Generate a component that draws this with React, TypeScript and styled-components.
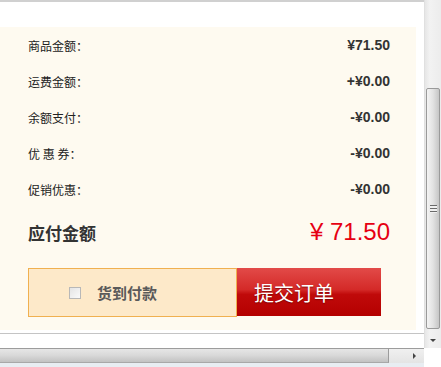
import React from "react";
import styled, { createGlobalStyle } from "styled-components";

const Global = createGlobalStyle`
  html, body { margin: 0; padding: 0; background: #fff; }
  body { width: 441px; height: 367px; overflow: hidden; font-family: "Liberation Sans", "Noto Sans CJK SC", sans-serif; }
`;

const Frame = styled.div`
  width: 441px;
  height: 367px;
  display: grid;
  grid-template-columns: 424px 17px;
  grid-template-rows: 348px 19px;
`;

const Viewport = styled.div`
  border-top: 2px solid #d0d0d0;
  display: flex;
  flex-direction: column;
  background: #fff;
`;

const Panel = styled.div`
  margin: 25px 8px 0 0;
  background: #fefaf0;
  padding: 0 26px 13px 28px;
  display: flex;
  flex-direction: column;
`;

const Row = styled.div`
  height: 36px;
  display: flex;
  align-items: center;
  justify-content: space-between;
`;

const Label = styled.span`
  font-family: "Noto Sans CJK SC", sans-serif;
  font-size: 12px;
  color: #222;
`;

const Value = styled.span`
  font-family: "Liberation Sans", Arial, sans-serif;
  font-weight: bold;
  font-size: 14px;
  color: #333;
`;

const TotalRow = styled.div`
  height: 50px;
  display: flex;
  align-items: center;
  justify-content: space-between;
`;

const TotalLabel = styled.span`
  font-family: "Noto Sans CJK SC", sans-serif;
  font-weight: bold;
  font-size: 17px;
  color: #333;
`;

const TotalValue = styled.span`
  font-family: "Liberation Sans", Arial, sans-serif;
  font-size: 24px;
  color: #e60012;
`;

const Actions = styled.div`
  margin-top: 11px;
  margin-right: 9px;
  display: flex;
  height: 49px;
`;

const CodBox = styled.label`
  width: 209px;
  box-sizing: border-box;
  border: 1px solid #f0b050;
  background: #fde9c9;
  display: flex;
  align-items: center;
  padding-left: 40px;
  gap: 16px;
`;

const Check = styled.span`
  width: 12px;
  height: 12px;
  box-sizing: border-box;
  border: 1px solid #b8b8b8;
  background: linear-gradient(135deg, #e4e4e4, #fafafa);
`;

const CodText = styled.span`
  font-family: "Noto Sans CJK SC", sans-serif;
  font-weight: bold;
  font-size: 15px;
  color: #5a5a5a;
`;

const Submit = styled.button`
  width: 144px;
  height: 48px;
  border: 0;
  padding: 0 0 0 17px;
  text-align: left;
  font-family: "Noto Sans CJK SC", sans-serif;
  font-size: 20px;
  color: #fff;
  text-shadow: 0 1px 1px rgba(90, 0, 0, 0.6);
  background: linear-gradient(#e24a48 0%, #d42a28 45%, #c00a0a 55%, #b40000 100%);
  cursor: pointer;
`;

const Spacer = styled.div`
  height: 3px;
`;

const Rule = styled.div`
  height: 1px;
  background: #c4c4c4;
`;

const VScroll = styled.div`
  grid-row: 1;
  grid-column: 2;
  background: linear-gradient(90deg, #e6e6e6 0%, #f2f2f2 30%, #ececec 100%);
  border-left: 1px solid #e0e0e0;
  display: flex;
  flex-direction: column;
`;

const VThumb = styled.div`
  margin: 88px 1px 0 1px;
  height: 241px;
  box-sizing: border-box;
  border: 1px solid #9a9a9a;
  border-radius: 2px;
  background: linear-gradient(90deg, #f4f4f4 0%, #e2e2e2 50%, #c6c6c6 100%);
  display: flex;
  align-items: center;
  justify-content: center;
`;

const Grip = styled.div`
  width: 7px;
  height: 8px;
  background: repeating-linear-gradient(#6a6a6a 0 1px, #f0f0f0 1px 3px);
`;

const DownArrow = styled.div`
  margin-top: 5px;
  height: 12px;
  display: flex;
  align-items: center;
  justify-content: center;
  &::after {
    content: "";
    border-left: 3px solid transparent;
    border-right: 3px solid transparent;
    border-top: 3px solid #444;
  }
`;

const HScroll = styled.div`
  grid-row: 2;
  grid-column: 1;
  display: flex;
  border-top: 1px solid #9c9c9c;
  background: #e8edf2;
`;

const HThumb = styled.div`
  width: 389px;
  height: 14px;
  box-sizing: border-box;
  border-right: 1px solid #9c9c9c;
  border-bottom: 1px solid #a8a8a8;
  background: linear-gradient(#e6e6e6 0%, #d8d8d8 50%, #c2c2c2 100%);
`;

const HTrack = styled.div`
  flex: 1;
  height: 14px;
  background: linear-gradient(#f0f0f0, #e4e4e4);
  display: flex;
  align-items: center;
  justify-content: flex-end;
  padding-right: 8px;
  &::after {
    content: "";
    border-top: 3px solid transparent;
    border-bottom: 3px solid transparent;
    border-left: 3px solid #444;
  }
`;

const Corner = styled.div`
  grid-row: 2;
  grid-column: 2;
  background: #fff;
`;

const rows: [string, string][] = [
  ["商品金额：", "¥71.50"],
  ["运费金额：", "+¥0.00"],
  ["余额支付：", "-¥0.00"],
  ["优 惠 券：", "-¥0.00"],
  ["促销优惠：", "-¥0.00"],
];

export default function App() {
  return (
    <>
      <Global />
      <Frame>
        <Viewport>
          <Panel>
            {rows.map(([l, v]) => (
              <Row key={l}>
                <Label>{l}</Label>
                <Value>{v}</Value>
              </Row>
            ))}
            <TotalRow>
              <TotalLabel>应付金额</TotalLabel>
              <TotalValue>¥ 71.50</TotalValue>
            </TotalRow>
            <Actions>
              <CodBox>
                <Check />
                <CodText>货到付款</CodText>
              </CodBox>
              <Submit>提交订单</Submit>
            </Actions>
          </Panel>
          <Spacer />
          <Rule />
        </Viewport>
        <VScroll>
          <VThumb>
            <Grip />
          </VThumb>
          <DownArrow />
        </VScroll>
        <HScroll>
          <HThumb />
          <HTrack />
        </HScroll>
        <Corner />
      </Frame>
    </>
  );
}
